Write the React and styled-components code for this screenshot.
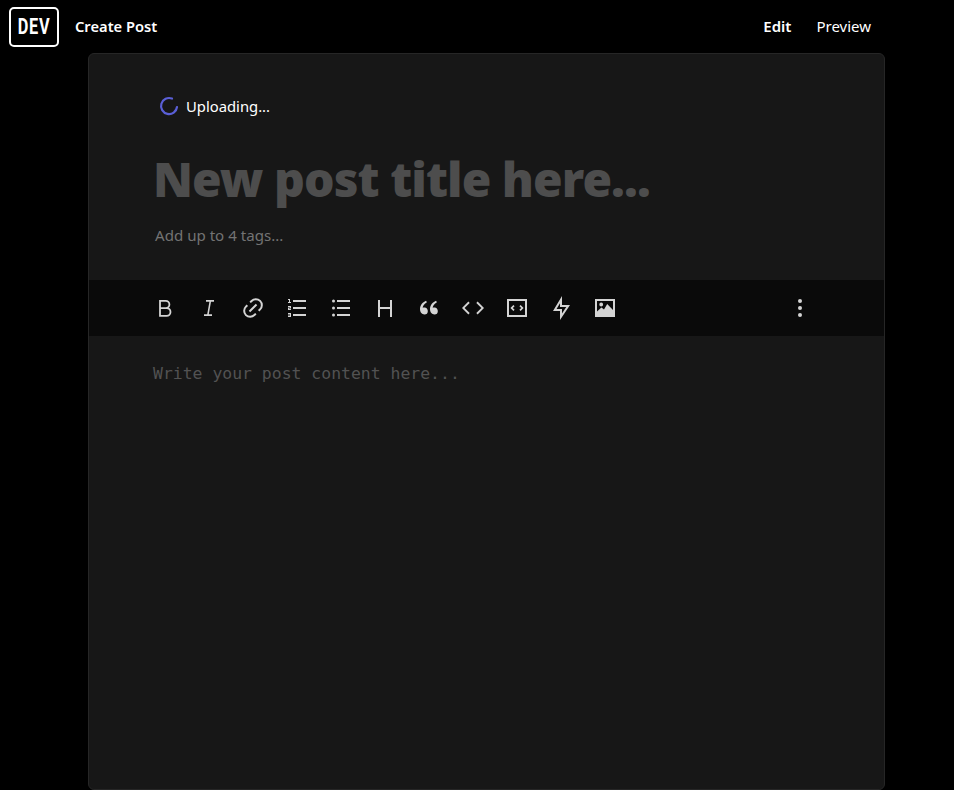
import styled, { createGlobalStyle } from 'styled-components';

const GlobalStyle = createGlobalStyle`
	html, body {
		margin: 0;
		height: 100%;
		overflow: hidden;
		background: #000;
		color: #fff;
		font-family: 'Noto Sans', 'Open Sans', sans-serif;
	}
`;

const ICON_COLOR = '#d4d4d4';

const Page = styled.div`
	display: flex;
	flex-direction: column;
	width: 954px;
	height: 790px;
	overflow: hidden;
`;

const TopBar = styled.header`
	display: flex;
	align-items: center;
	flex: 0 0 53px;
	padding: 0 83px 0 9px;
`;

const Logo = styled.div`
	display: flex;
	align-items: center;
	justify-content: center;
	box-sizing: border-box;
	width: 50px;
	height: 40px;
	border: 2px solid #fff;
	border-radius: 5px;
	span {
		font-family: 'Roboto', sans-serif;
		font-weight: 700;
		font-size: 22px;
		letter-spacing: 1px;
		transform: scaleX(0.74);
	}
`;

const PageTitle = styled.div`
	margin-left: 16px;
	padding-bottom: 2px;
	font-size: 14.7px;
	font-weight: 600;
`;

const Tabs = styled.nav`
	display: flex;
	gap: 25px;
	margin-left: auto;
	padding-bottom: 2px;
`;

const Tab = styled.span`
	font-size: 15px;
	font-weight: ${(p) => (p.$active ? 600 : 400)};
`;

const Card = styled.main`
	display: flex;
	flex-direction: column;
	box-sizing: border-box;
	width: 797px;
	height: 737px;
	margin-left: 88px;
	background: #171717;
	border: 1px solid #262626;
	border-radius: 6px;
`;

const Head = styled.div`
	display: flex;
	flex-direction: column;
	height: 226px;
	padding: 41px 0 0 66px;
	box-sizing: border-box;
`;

const Upload = styled.div`
	display: flex;
	align-items: center;
	gap: 7px;
	margin-left: 4px;
	height: 22px;
	font-size: 14.8px;
`;

const Title = styled.div`
	margin-top: 26px;
	margin-left: -2px;
	font-size: 48px;
	line-height: 72px;
	font-weight: 900;
	letter-spacing: -0.95px;
	color: #4d4d4d;
	white-space: nowrap;
`;

const Tags = styled.div`
	margin-top: 9px;
	font-size: 15.1px;
	line-height: 22px;
	color: #737373;
`;

const Toolbar = styled.div`
	display: flex;
	align-items: center;
	gap: 4px;
	height: 56px;
	padding: 0 64px 0 56px;
	background: #0a0a0a;
`;

const ToolButton = styled.button`
	display: flex;
	align-items: center;
	justify-content: center;
	width: 40px;
	height: 40px;
	padding: 0;
	border: 0;
	background: none;
	color: ${ICON_COLOR};
	margin-left: ${(p) => (p.$end ? 'auto' : '0')};
`;

const Body = styled.div`
	padding: 28px 0 0 64px;
	font-family: 'DejaVu Sans Mono', monospace;
	font-size: 16.45px;
	line-height: 20px;
	color: #525252;
`;

const Icon = ({ d, children }) => (
	<svg width="24" height="24" viewBox="0 0 24 24" fill="currentColor">
		{d && <path d={d} />}
		{children}
	</svg>
);

const Spinner = () => (
	<svg width="20" height="20" viewBox="0 0 20 20" fill="none">
		<path
			d="M13 2.6A8 8 0 1 0 18 11"
			stroke="#5a5fd6"
			strokeWidth="2.2"
			strokeLinecap="round"
		/>
	</svg>
);

const tools = [
	{
		name: 'bold',
		body: (
			<path
				d="M7 4.9h5.8a3.6 3.6 0 0 1 0 7.2H7zM7 12.1h6.6a3.9 3.9 0 0 1 0 7.8H7z"
				fill="none"
				stroke="currentColor"
				strokeWidth="1.8"
			/>
		)
	},
	{ name: 'italic', d: 'M15 20H7v-1.7h3.2l2.2-12.6H9V4h8v1.7h-3l-2.2 12.6H15z' },
	{
		name: 'link',
		d: 'M18.364 15.536L16.95 14.12l1.414-1.414a5 5 0 1 0-7.071-7.071L9.879 7.05 8.464 5.636 9.88 4.222a7 7 0 0 1 9.9 9.9l-1.415 1.414zm-2.828 2.828l-1.415 1.414a7 7 0 0 1-9.9-9.9l1.415-1.414L7.05 9.88l-1.414 1.414a5 5 0 1 0 7.071 7.071l1.414-1.414 1.415 1.414zm-.708-10.607l1.415 1.415-7.071 7.07-1.415-1.414 7.071-7.07z'
	},
	{
		name: 'ordered',
		d: 'M8 4h13v2H8V4zM5 3v3h1v1H3V6h1V4H3V3h2zM3 14v-2.5h2V11H3v-1h3v2.5H4v.5h2v1H3zm2 5.5H3v-1h2V18H3v-1h3v4H3v-1h2v-.5zM8 11h13v2H8v-2zm0 7h13v2H8v-2z'
	},
	{
		name: 'unordered',
		d: 'M8 4h13v2H8V4zM4.5 6.5a1.5 1.5 0 1 1 0-3 1.5 1.5 0 0 1 0 3zm0 7a1.5 1.5 0 1 1 0-3 1.5 1.5 0 0 1 0 3zm0 6.9a1.5 1.5 0 1 1 0-3 1.5 1.5 0 0 1 0 3zM8 11h13v2H8v-2zm0 7h13v2H8v-2z'
	},
	{ name: 'heading', d: 'M17 11V4h2v17h-2v-8H7v8H5V4h2v7z' },
	{
		name: 'quote',
		d: 'M4.583 17.321C3.553 16.227 3 15 3 13.011c0-3.5 2.457-6.637 6.03-8.188l.893 1.378c-3.335 1.804-3.987 4.145-4.247 5.621.537-.278 1.24-.375 1.929-.311 1.804.167 3.226 1.648 3.226 3.489a3.5 3.5 0 0 1-3.5 3.5c-1.073 0-2.099-.49-2.748-1.179zm10 0C13.553 16.227 13 15 13 13.011c0-3.5 2.457-6.637 6.03-8.188l.893 1.378c-3.335 1.804-3.987 4.145-4.247 5.621.537-.278 1.24-.375 1.929-.311 1.804.167 3.226 1.648 3.226 3.489a3.5 3.5 0 0 1-3.5 3.5c-1.073 0-2.099-.49-2.748-1.179z'
	},
	{
		name: 'code',
		d: 'M23 12l-6.4 6.4-1.3-1.3L20.4 12l-5.1-5.1 1.3-1.3L23 12zM3.6 12l5.1 5.1-1.3 1.3L1 12l6.4-6.4 1.3 1.3L3.6 12z'
	},
	{
		name: 'codeblock',
		d: 'M2 3h20v18H2V3zm2 2v14h16V5H4zm14.6 7l-3 3-1.2-1.2 1.8-1.8-1.8-1.8 1.2-1.2 3 3zM5.4 12l3-3 1.2 1.2L7.8 12l1.8 1.8-1.2 1.2-3-3z'
	},
	{ name: 'embed', d: 'M13 9h8L11 24v-9H4l9-15v9zm-2 2V7.22L7.532 13H13v4.394L17.263 11H11z' },
	{
		name: 'image',
		d: 'M2 3h20v18H2V3zm2 2v10.6l4.4-4 2.6 2L14.2 8l5.8 6V5H4zm4.2 5.4a1.9 1.9 0 1 1 0-3.8 1.9 1.9 0 0 1 0 3.8z'
	}
];

const App = () => {
	return (
		<Page>
			<GlobalStyle />
			<TopBar>
				<Logo>
					<span>DEV</span>
				</Logo>
				<PageTitle>Create Post</PageTitle>
				<Tabs>
					<Tab $active>Edit</Tab>
					<Tab>Preview</Tab>
				</Tabs>
			</TopBar>
			<Card>
				<Head>
					<Upload>
						<Spinner />
						Uploading...
					</Upload>
					<Title>New post title here...</Title>
					<Tags>Add up to 4 tags...</Tags>
				</Head>
				<Toolbar>
					{tools.map((tool) => (
						<ToolButton key={tool.name} aria-label={tool.name}>
							<Icon d={tool.d}>{tool.body}</Icon>
						</ToolButton>
					))}
					<ToolButton $end aria-label="more">
						<Icon>
							<circle cx="12" cy="5" r="2" />
							<circle cx="12" cy="12" r="2" />
							<circle cx="12" cy="19" r="2" />
						</Icon>
					</ToolButton>
				</Toolbar>
				<Body>Write your post content here...</Body>
			</Card>
		</Page>
	);
};

export default App;
